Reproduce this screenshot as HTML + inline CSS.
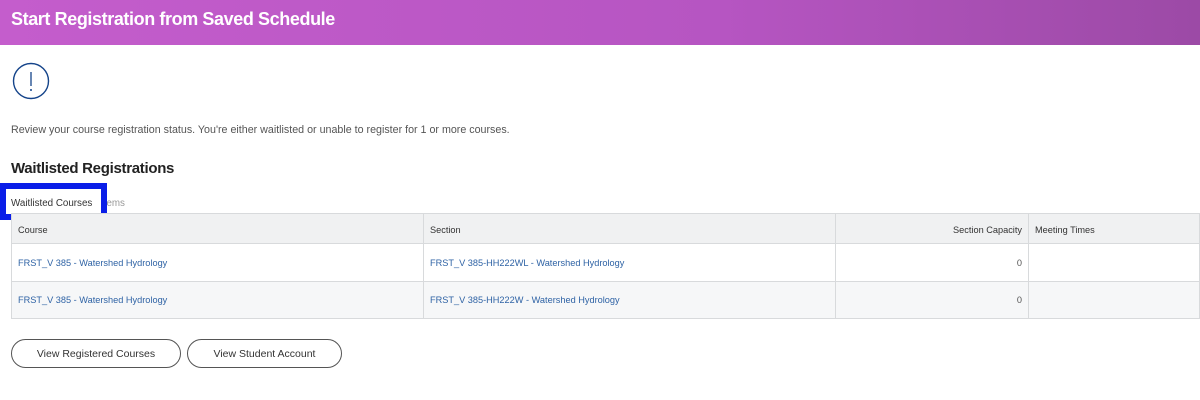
<!DOCTYPE html>
<html><head><meta charset="utf-8"><style>
*{margin:0;padding:0;box-sizing:border-box}
body{width:1200px;height:400px;background:#fff;font-family:"Liberation Sans",sans-serif;position:relative;overflow:hidden;color:#333}
.hdr{position:absolute;left:0;top:0;width:1200px;height:45px;background:linear-gradient(90deg,#c45dcc 0%,#b655c2 60%,#9c4aa6 100%)}
.hdr h1{position:absolute;left:11px;top:9px;font-size:18px;font-weight:bold;color:#fff;letter-spacing:-0.4px}
.abs{position:absolute;white-space:nowrap}
table{position:absolute;left:11px;top:213px;border-collapse:collapse;font-size:9.2px}
td,th{border:1px solid #d8dadc;padding:0 6px;text-align:left;font-weight:normal}
th{background:#f0f1f2;color:#333;height:30px;padding-top:2px}
tr.r1 td{height:38px;background:#fff}
tr.r2 td{height:37px;background:#f6f7f8}
a{color:#2f63a5;text-decoration:none}
.btn{position:absolute;top:339px;height:29px;border:1px solid #555;border-radius:15px;font-size:10.5px;color:#333;display:flex;align-items:center;justify-content:center;background:#fff}
</style></head><body>
<div class="hdr"><h1>Start Registration from Saved Schedule</h1></div>
<svg class="abs" style="left:12px;top:62px" width="40" height="40"><circle cx="19" cy="19" r="17.5" fill="none" stroke="#15448a" stroke-width="1.4"/><line x1="19" y1="10" x2="19" y2="24" stroke="#15448a" stroke-width="1.3"/><circle cx="19" cy="28" r="1" fill="#15448a"/></svg>
<div class="abs" style="left:11px;top:124px;font-size:10.7px;color:#555">Review your course registration status. You're either waitlisted or unable to register for 1 or more courses.</div>
<div class="abs" style="left:11px;top:160px;font-size:15px;font-weight:bold;color:#222;letter-spacing:-0.3px">Waitlisted Registrations</div>
<div class="abs" style="left:101px;top:198px;font-size:9.8px;color:#999">Items</div>
<div class="abs" style="left:0;top:183px;width:107px;height:37px;border:6px solid #0a1ee8;background:#fff"></div>
<div class="abs" style="left:11px;top:198px;font-size:9.8px;color:#333">Waitlisted Courses</div>
<table>
<tr><th style="width:412px">Course</th><th style="width:412px">Section</th><th style="width:193px;text-align:right">Section Capacity</th><th style="width:171px">Meeting Times</th></tr>
<tr class="r1"><td><a>FRST_V 385 - Watershed Hydrology</a></td><td><a>FRST_V 385-HH222WL - Watershed Hydrology</a></td><td style="text-align:right;color:#555">0</td><td></td></tr>
<tr class="r2"><td><a>FRST_V 385 - Watershed Hydrology</a></td><td><a>FRST_V 385-HH222W - Watershed Hydrology</a></td><td style="text-align:right;color:#555">0</td><td></td></tr>
</table>
<div class="btn" style="left:11px;width:170px">View Registered Courses</div>
<div class="btn" style="left:187px;width:155px">View Student Account</div>
</body></html>
